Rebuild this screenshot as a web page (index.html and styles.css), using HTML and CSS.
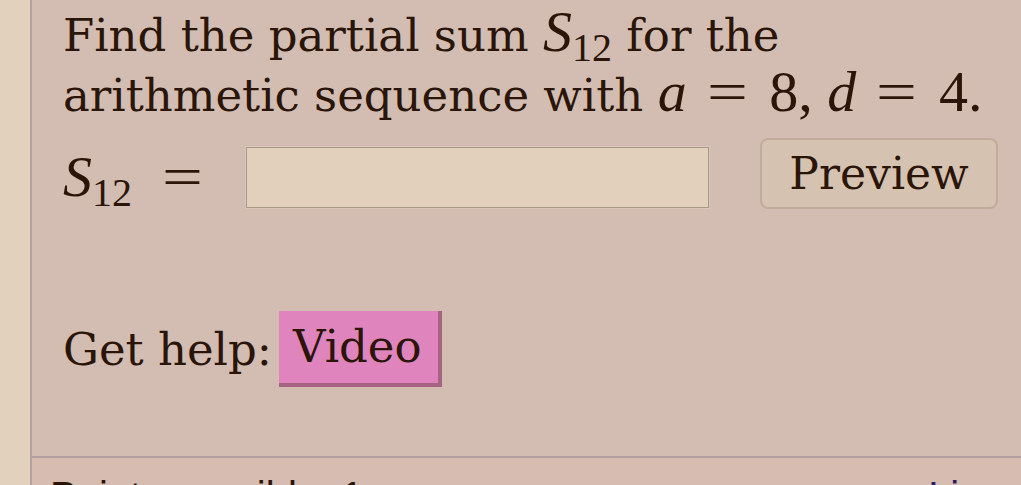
FILE: index.html
```html
<!DOCTYPE html>
<html>
<head>
<meta charset="utf-8">
<link rel="stylesheet" href="styles.css">
</head>
<body>
<div class="page">
  <div class="sidebar"></div>
  <div class="main">
    <div class="question">
      <p class="prompt">Find the partial sum <span class="math"><i>S</i><sub>12</sub></span> for the<br>arithmetic sequence with <span class="math"><i>a</i><span class="op">=</span>8, <i>d</i><span class="op">=</span>4.</span></p>
      <div class="answer-row">
        <span class="math label"><i>S</i><sub>12</sub><span class="op">=</span></span>
        <input class="answer" type="text">
        <button class="preview">Preview</button>
      </div>
      <div class="help-row">
        <span>Get help:</span>
        <a class="video">Video</a>
      </div>
    </div>
    <div class="footer">
      <span class="points">Points possible: 1</span>
      <span class="license">License</span>
    </div>
  </div>
</div>
</body>
</html>
```
FILE: styles.css
```css
html, body {
  margin: 0;
  padding: 0;
  height: 100%;
  overflow: hidden;
}
body {
  background: #d3bdb2;
  color: #2a1508;
  font-family: "DejaVu Serif", serif;
}
.page {
  display: flex;
  height: 485px;
}
.sidebar {
  width: 30px;
  background: #e2d1bd;
  border-right: 2px solid #b3a1a3;
  flex: none;
}
.main {
  flex: 1;
  display: flex;
  flex-direction: column;
  overflow: hidden;
}
.question {
  flex: none;
  height: 456px;
  padding-left: 31px;
  box-sizing: border-box;
}
.prompt {
  margin: 0;
  padding-top: 4px;
  font-size: 45px;
  line-height: 56px;
  white-space: nowrap;
}
.math {
  font-family: "Liberation Serif", serif;
  font-size: 58px;
}
.math i {
  font-style: italic;
}
.math sub {
  font-size: 40px;
  vertical-align: -10px;
  line-height: 0;
}
.op {
  display: inline-block;
  margin: 0 26px 0 24px;
  transform: scaleX(1.25);
}
.answer-row {
  display: flex;
  align-items: center;
  height: 70px;
  margin-top: 15px;
}
.label {
  width: 183px;
  flex: none;
  padding-top: 4px;
}
.label .op {
  margin-left: 34px;
}
.answer {
  width: 463px;
  height: 61px;
  box-sizing: border-box;
  border: 1px solid #a89886;
  background: #e2d0bc;
  box-shadow: 0 0 0 1px #dcc6b8;
  margin: 7px 0 0 0;
  padding: 0;
}
.preview {
  margin-left: 51px;
  width: 238px;
  height: 71px;
  box-sizing: border-box;
  border: 2px solid #c3ab9b;
  border-radius: 8px;
  background: #d6c2b0;
  color: #2a1508;
  font-family: "DejaVu Serif", serif;
  font-size: 44px;
  padding: 0;
  margin-top: -1px;
}
.help-row {
  display: flex;
  align-items: center;
  margin-top: 102px;
  font-size: 45px;
  gap: 10px;
}
.video {
  display: block;
  background: #e084bd;
  border-right: 4px solid #a66482;
  border-bottom: 4px solid #a66482;
  padding: 0 16px 0 14px;
  height: 72px;
  line-height: 72px;
  box-sizing: content-box;
  margin-left: -3px;
}
.footer {
  flex: none;
  height: 40px;
  border-top: 2px solid #b39f9f;
  background: #d6bcb1;
  display: flex;
  justify-content: space-between;
  padding: 18px 0 0 18px;
  font-family: "Liberation Sans", sans-serif;
  font-size: 40px;
  line-height: 40px;
}
.license {
  color: #2a1a5e;
  margin-right: -45px;
}
```
